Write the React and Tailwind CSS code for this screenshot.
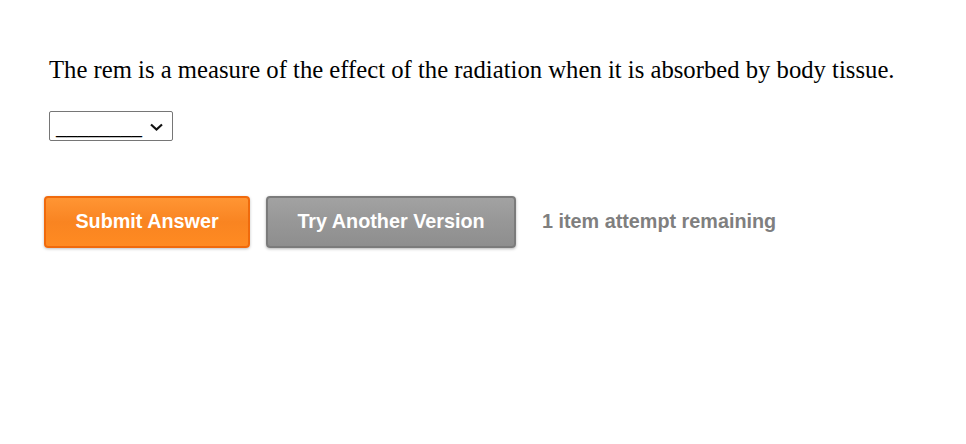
import React, { useState } from 'react';

function App() {
  const [choice, setChoice] = useState('');

  return (
    <div className="min-h-screen bg-white px-[49px] pt-[52px]" style={{ fontFamily: '"Liberation Serif", serif' }}>
      <p className="text-[24.7px] leading-[36px] text-black">
        The rem is a measure of the effect of the radiation when it is absorbed by body tissue.
      </p>

      <div className="mt-[23px] flex">
        <div className="relative h-[30px] w-[124px] border border-[#767676] rounded-[2px] bg-white">
          <select
            value={choice}
            onChange={(e) => setChoice(e.target.value)}
            className="absolute inset-0 h-full w-full cursor-pointer appearance-none opacity-0"
          >
            <option value="">________</option>
            <option value="true">true</option>
            <option value="false">false</option>
          </select>
          <span className="pointer-events-none absolute left-[6px] top-0 text-[21.5px] leading-[30px] text-black">{choice || '________'}</span>
          <svg className="pointer-events-none absolute right-[8px] top-[10px]" width="15" height="10" viewBox="0 0 15 10" fill="none">
            <path d="M2 2.5 L7.5 7.5 L13 2.5" stroke="#111" strokeWidth="2.2" />
          </svg>
        </div>
      </div>

      <div className="mt-[55px] -ml-[5px] flex items-center" style={{ fontFamily: '"Liberation Sans", Arial, sans-serif' }}>
        <button className="h-[52px] w-[206px] rounded-[4px] border-2 border-[#f06a0c] bg-gradient-to-b from-[#ff9533] via-[#f98421] to-[#ff8b22] text-[19.8px] font-bold text-white shadow-[0_1px_3px_rgba(0,0,0,0.25)]">
          Submit Answer
        </button>
        <button className="ml-[16px] h-[52px] w-[250px] rounded-[4px] border-2 border-[#7b7b7b] bg-gradient-to-b from-[#a2a2a2] via-[#979797] to-[#8e8e8e] text-[19.8px] font-bold text-white shadow-[0_1px_3px_rgba(0,0,0,0.3)]">
          Try Another Version
        </button>
        <span className="ml-[26px] text-[19.8px] font-bold text-[#7f7f7f]">1 item attempt remaining</span>
      </div>
    </div>
  );
}

export default App;
